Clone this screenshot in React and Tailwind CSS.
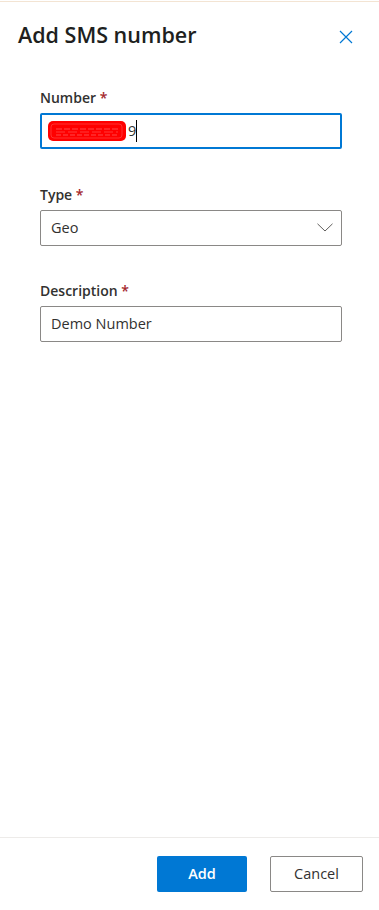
import React from "react";

const font = { fontFamily: '"Open Sans", "Noto Sans", sans-serif' };

function Label({ children }) {
  return (
    <div className="h-[20px] leading-[20px] text-[14px] font-semibold text-[#323130] mb-[5px]">
      {children} <span className="text-[#a4262c]">*</span>
    </div>
  );
}

function Scribble() {
  return (
    <svg width="78" height="20" viewBox="0 0 78 20" className="shrink-0">
      <rect x="0" y="0" width="78" height="20" rx="5" fill="#ff0000" />
      <rect x="3" y="3" width="71" height="14" rx="3" fill="none" stroke="#ff5050" strokeWidth="0.6" />
      <line x1="8" y1="8" x2="70" y2="8" stroke="#ff7a7a" strokeWidth="0.6" strokeDasharray="6 2" />
      <line x1="8" y1="11" x2="70" y2="11" stroke="#ff6060" strokeWidth="0.6" strokeDasharray="9 3" />
      <line x1="8" y1="14" x2="70" y2="14" stroke="#ff7a7a" strokeWidth="0.6" strokeDasharray="5 2" />
    </svg>
  );
}

export default function App() {
  return (
    <div className="w-[379px] h-[910px] bg-white flex flex-col pt-[1px]" style={font}>
      <div className="h-[1px] bg-[#f3e4d3]" />
      <div className="flex items-start justify-between pl-[18px] pr-[26px] pt-[19px]">
        <div className="text-[21.5px] leading-[28px] font-semibold text-[#201f1e]">Add SMS number</div>
        <svg width="14" height="14" viewBox="0 0 14 14" className="mt-[9px]">
          <path d="M1 1 L13 13 M13 1 L1 13" stroke="#0078d4" strokeWidth="1.2" fill="none" />
        </svg>
      </div>

      <div className="flex-1 flex flex-col gap-[35.5px] pl-[40px] pr-[37px] pt-[39px]">
        <div>
          <Label>Number</Label>
          <div className="h-[36px] border-2 border-[#0078d4] rounded-[2px] flex items-center pl-[6px]">
            <Scribble />
            <span className="text-[14.5px] text-[#323130] ml-[2px] leading-[20px]">9</span>
            <span className="w-[1px] h-[22px] bg-black" />
          </div>
        </div>
        <div>
          <Label>Type</Label>
          <div className="h-[36px] border border-[#8a8886] rounded-[2px] flex items-center justify-between pl-[10px] pr-[8px]">
            <span className="text-[14.5px] text-[#323130]">Geo</span>
            <svg width="16" height="9" viewBox="0 0 16 9">
              <path d="M0.5 0.8 L8 8 L15.5 0.8" stroke="#605e5c" strokeWidth="1" fill="none" />
            </svg>
          </div>
        </div>
        <div>
          <Label>Description</Label>
          <div className="h-[36px] border border-[#8a8886] rounded-[2px] flex items-center pl-[10px]">
            <span className="text-[14.5px] text-[#323130]">Demo Number</span>
          </div>
        </div>
      </div>

      <div className="border-t border-[#edebe9] flex justify-end gap-[23px] pt-[18px] pb-[18px] pr-[16px]">
        <button className="w-[90px] h-[36px] bg-[#0078d4] rounded-[2px] text-white text-[14.5px] font-semibold">Add</button>
        <button className="w-[93px] h-[36px] border border-[#8a8886] rounded-[2px] text-[#323130] text-[14.5px]">Cancel</button>
      </div>
    </div>
  );
}
